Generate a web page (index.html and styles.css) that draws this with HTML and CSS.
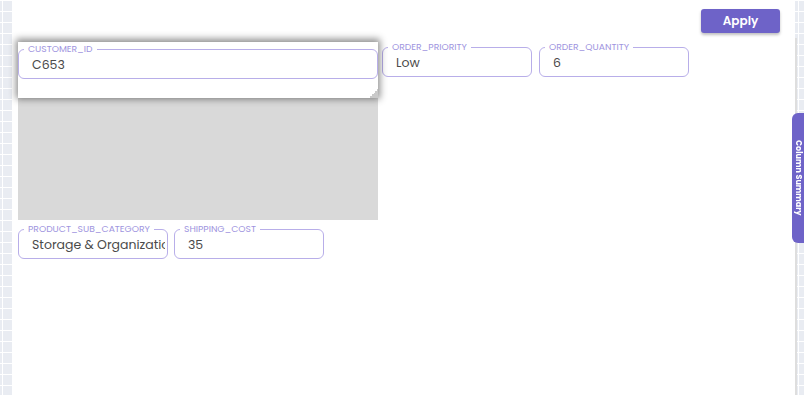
FILE: index.html
```html
<!DOCTYPE html>
<html lang="en">
<head>
  <meta charset="UTF-8">
  <meta name="viewport" content="width=device-width, initial-scale=1.0">
  <title>Filters</title>
  <link rel="stylesheet" href="styles.css">
</head>
<body>

  <div class="page">
    <!-- декоративна сітка зліва -->
    <div class="strip strip-left"></div>

    <main class="main">
      <div class="toolbar">
        <button type="button" class="apply">Apply</button>
      </div>

      <div class="field-row">
        <!-- розгорнуте поле -->
        <div class="field-wide">
          <div class="popup">
            <fieldset class="field field-popup">
              <legend>CUSTOMER_ID</legend>
              <div class="value">C653</div>
            </fieldset>
            <span class="grip"></span>
          </div>
        </div>

        <fieldset class="field field-top">
          <legend>ORDER_PRIORITY</legend>
          <div class="value">Low</div>
        </fieldset>

        <fieldset class="field field-top field-last">
          <legend>ORDER_QUANTITY</legend>
          <div class="value">6</div>
        </fieldset>
      </div>

      <div class="field-row field-row-second">
        <fieldset class="field">
          <legend>PRODUCT_SUB_CATEGORY</legend>
          <div class="value">Storage &amp; Organization</div>
        </fieldset>

        <fieldset class="field">
          <legend>SHIPPING_COST</legend>
          <div class="value">35</div>
        </fieldset>
      </div>
    </main>

    <div class="strip strip-right">
      <div class="rail"></div>
    </div>
  </div>

  <div class="side-tab">Column Summary</div>

</body>
</html>
```

FILE: styles.css
```css
body {
  margin: 0;
  background-color: #ffffff;
  font-family: Poppins, "Open Sans", "Noto Sans", sans-serif;
}
.page {
  display: flex;
  height: 395px;
  overflow: hidden;
}
/* Сітка по краях */
.strip {
  flex: none;
  background-color: #e9ecf2;
  background-image:
    linear-gradient(to right, #ffffff 1px, transparent 1px),
    linear-gradient(to bottom, #ffffff 1px, transparent 1px);
  background-size: 11px 11px;
}
.strip-left {
  width: 12px;
  background-position: 2px 0;
}
.strip-right {
  width: 9px;
  background-position: 3px 0;
}
.rail {
  margin-top: 38px;
  width: 2px;
  height: 100%;
  background-color: #dedede;
}
.main {
  flex: 1;
  padding: 9px 15px 0 6px;
}
.toolbar {
  display: flex;
  justify-content: flex-end;
  height: 24px;
  margin-bottom: 9px;
}
.apply {
  width: 79px;
  height: 24px;
  border: none;
  border-radius: 3px;
  background-color: #6e63c8;
  color: #ffffff;
  font-family: inherit;
  font-size: 12px;
  font-weight: 600;
  box-shadow: 0 2px 3px rgba(0, 0, 0, 0.25);
}
/* Поля */
.field-row {
  display: flex;
  align-items: flex-start;
  gap: 6px;
}
.field-row-second {
  margin-top: 4px;
}
.field {
  box-sizing: border-box;
  width: 150px;
  margin: 0;
  padding: 1px 2px 3px 13px;
  border: 1px solid #b8aee9;
  border-radius: 6px;
  min-inline-size: 0;
}
.field legend {
  margin-left: -8px;
  padding: 0 4px;
  font-size: 9.2px;
  line-height: 10px;
  color: #a095e0;
}
.value {
  height: 20px;
  line-height: 20px;
  font-size: 12.5px;
  color: #4a4a4a;
  white-space: nowrap;
  overflow: hidden;
}
.field-last {
  margin-left: 1px;
}
.field-wide {
  width: 360px;
  height: 178px;
  margin-right: -2px;
  background-color: #d9d9d9;
}
.popup {
  position: relative;
  height: 56px;
  padding-top: 2px;
  box-sizing: border-box;
  background-color: #ffffff;
  box-shadow: 0 -1px 7px 2px rgba(0, 0, 0, 0.45);
}
.field-popup {
  width: 360px;
}
.grip {
  position: absolute;
  right: 0;
  bottom: 0;
  width: 9px;
  height: 9px;
  background: linear-gradient(135deg, transparent 50%, #c9c9c9 50%);
}
/* Бокова вкладка */
.side-tab {
  position: fixed;
  top: 113px;
  right: 0;
  width: 12px;
  height: 130px;
  overflow: hidden;
  border-radius: 6px 0 0 6px;
  background-color: #6e63c8;
  color: #ffffff;
  font-size: 8px;
  font-weight: 700;
  line-height: 12px;
  writing-mode: vertical-rl;
  text-align: center;
}
```
